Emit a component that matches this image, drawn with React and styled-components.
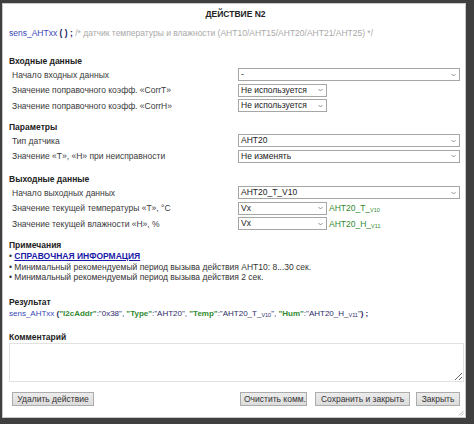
import React from "react";
import styled, { createGlobalStyle } from "styled-components";

const Global = createGlobalStyle`
  html, body { margin: 0; padding: 0; }
  body {
    background: #3f3f3f;
    font-family: "Liberation Sans", Arial, sans-serif;
    width: 474px;
    height: 424px;
    overflow: hidden;
  }
`;

const Page = styled.div`
  padding: 3px 0 0 2px;
`;

const Dialog = styled.div`
  position: relative;
  box-sizing: border-box;
  width: 464px;
  height: 415px;
  background: #fff;
  border: 1px solid #c9c9c9;
  padding: 4px 5px 0 6px;
  color: #333;
  font-size: 8.5px;
`;

const Title = styled.div`
  text-align: center;
  font-weight: bold;
  line-height: 12px;
  color: #222;
  padding-left: 2px;
`;

const Code = styled.div`
  line-height: 12px;
  margin-top: ${(p) => p.$mt || 0}px;
  font-size: ${(p) => p.$fs || 8.5}px;
  white-space: nowrap;
  color: #2c2c6a;
`;

const Fn = styled.span`
  color: #3848b8;
`;

const Punct = styled.span`
  color: #1d1d5c;
  font-weight: bold;
`;

const Comment = styled.span`
  color: #a9a9a9;
`;

const Key = styled.span`
  color: #2f8a2f;
  font-weight: bold;
`;

const Header = styled.div`
  font-weight: bold;
  color: #222;
  line-height: 12px;
  margin-top: ${(p) => p.$mt}px;
`;

const Row = styled.div`
  display: grid;
  grid-template-columns: 229px 1fr;
  align-items: center;
  height: 15.5px;
`;

const Label = styled.div`
  padding-left: 3px;
  color: #3a3a3a;
  white-space: nowrap;
`;

const Field = styled.div`
  display: flex;
  align-items: center;
  gap: 2px;
`;

const SelectBox = styled.div`
  box-sizing: border-box;
  width: ${(p) => (p.$small ? "89px" : "100%")};
  height: 13px;
  border: 1px solid #a6a6a6;
  background: #fff;
  display: flex;
  align-items: center;
  justify-content: space-between;
  padding: 0 3px 0 2px;
  color: #222;
  line-height: 11px;
  white-space: nowrap;
`;

const Chevron = styled.svg`
  width: 5px;
  height: 4px;
  flex: none;
`;

const Out = styled.span`
  color: #2f8a2f;
  white-space: nowrap;
  sub {
    font-size: 5.5px;
    vertical-align: -1px;
  }
`;

const Notes = styled.div`
  line-height: 10.5px;
  color: #333;
`;

const Link = styled.a`
  color: #1a1aa8;
  font-weight: bold;
  text-decoration: underline;
`;

const Sub = styled.sub`
  font-size: 5.5px;
  vertical-align: -1px;
`;

const TextArea = styled.textarea`
  display: block;
  box-sizing: border-box;
  width: 455px;
  height: 39px;
  margin: 0;
  border: 1px solid #e2e2e2;
  resize: vertical;
  font-family: inherit;
  font-size: 8.5px;
`;

const Buttons = styled.div`
  display: flex;
  align-items: center;
  margin-top: 10px;
  padding-left: 3px;
`;

const Button = styled.button`
  box-sizing: border-box;
  height: 14px;
  padding: 0 3px;
  margin-left: ${(p) => p.$ml || 0}px;
  font-family: inherit;
  font-size: 8.5px;
  color: #333;
  background: linear-gradient(#ececec, #dcdcdc);
  border: 1px solid #acacac;
  border-radius: 0;
  line-height: 12px;
  white-space: nowrap;
  width: ${(p) => p.$w}px;
`;

const Grip = styled.svg`
  position: absolute;
  right: 1px;
  bottom: 1px;
  width: 6px;
  height: 6px;
`;

function Select({ value, small }) {
  return (
    <SelectBox $small={small}>
      <span>{value}</span>
      <Chevron viewBox="0 0 5 4">
        <path d="M0.5 1 L2.5 3 L4.5 1" fill="none" stroke="#777" strokeWidth="0.8" />
      </Chevron>
    </SelectBox>
  );
}

export default function App() {
  return (
    <>
      <Global />
      <Page>
        <Dialog>
          <Title>ДЕЙСТВИЕ N2</Title>
          <Code $mt={7}>
            <Fn>sens_AHTxx</Fn> <Punct>( ) ;</Punct>{" "}
            <Comment>/* датчик температуры и влажности (AHT10/AHT15/AHT20/AHT21/AHT25) */</Comment>
          </Code>

          <Header $mt={16}>Входные данные</Header>
          <Row>
            <Label>Начало входных данных</Label>
            <Field><Select value="-" /></Field>
          </Row>
          <Row>
            <Label>Значение поправочного коэфф. «CorrT»</Label>
            <Field><Select value="Не используется" small /></Field>
          </Row>
          <Row>
            <Label>Значение поправочного коэфф. «CorrH»</Label>
            <Field><Select value="Не используется" small /></Field>
          </Row>

          <Header $mt={7.5}>Параметры</Header>
          <Row>
            <Label>Тип датчика</Label>
            <Field><Select value="AHT20" /></Field>
          </Row>
          <Row>
            <Label>Значение «T», «H» при неисправности</Label>
            <Field><Select value="Не изменять" /></Field>
          </Row>

          <Header $mt={9}>Выходные данные</Header>
          <Row>
            <Label>Начало выходных данных</Label>
            <Field><Select value="AHT20_T_V10" /></Field>
          </Row>
          <Row>
            <Label>Значение текущей температуры «T», °C</Label>
            <Field>
              <Select value="Vx" small />
              <Out>AHT20_T_<sub>V10</sub></Out>
            </Field>
          </Row>
          <Row>
            <Label>Значение текущей влажности «H», %</Label>
            <Field>
              <Select value="Vx" small />
              <Out>AHT20_H_<sub>V11</sub></Out>
            </Field>
          </Row>

          <Header $mt={7.5}>Примечания</Header>
          <Notes>
            <div>• <Link href="#">СПРАВОЧНАЯ ИНФОРМАЦИЯ</Link></div>
            <div>• Минимальный рекомендуемый период вызыва действия AHT10: 8...30 сек.</div>
            <div>• Минимальный рекомендуемый период вызыва действия 2 сек.</div>
          </Notes>

          <Header $mt={13.5}>Результат</Header>
          <Code $fs={8}>
            <Fn>sens_AHTxx</Fn> <Punct>(</Punct><Key>"I2cAddr"</Key>:"0x38",{" "}
            <Key>"Type"</Key>:"AHT20",{" "}
            <Key>"Temp"</Key>:"AHT20_T_<Sub>V10</Sub>",{" "}
            <Key>"Hum"</Key>:"AHT20_H_<Sub>V11</Sub>"<Punct>) ;</Punct>
          </Code>

          <Header $mt={10}>Комментарий</Header>
          <TextArea />

          <Buttons>
            <Button $w={82}>Удалить действие</Button>
            <Button $w={67} $ml={146}>Очистить комм.</Button>
            <Button $w={95} $ml={8}>Сохранить и закрыть</Button>
            <Button $w={44} $ml={6}>Закрыть</Button>
          </Buttons>

          <Grip viewBox="0 0 6 6">
            <path d="M5.5 1 L1 5.5 M5.5 3.5 L3.5 5.5" stroke="#999" strokeWidth="0.7" />
          </Grip>
        </Dialog>
      </Page>
    </>
  );
}
